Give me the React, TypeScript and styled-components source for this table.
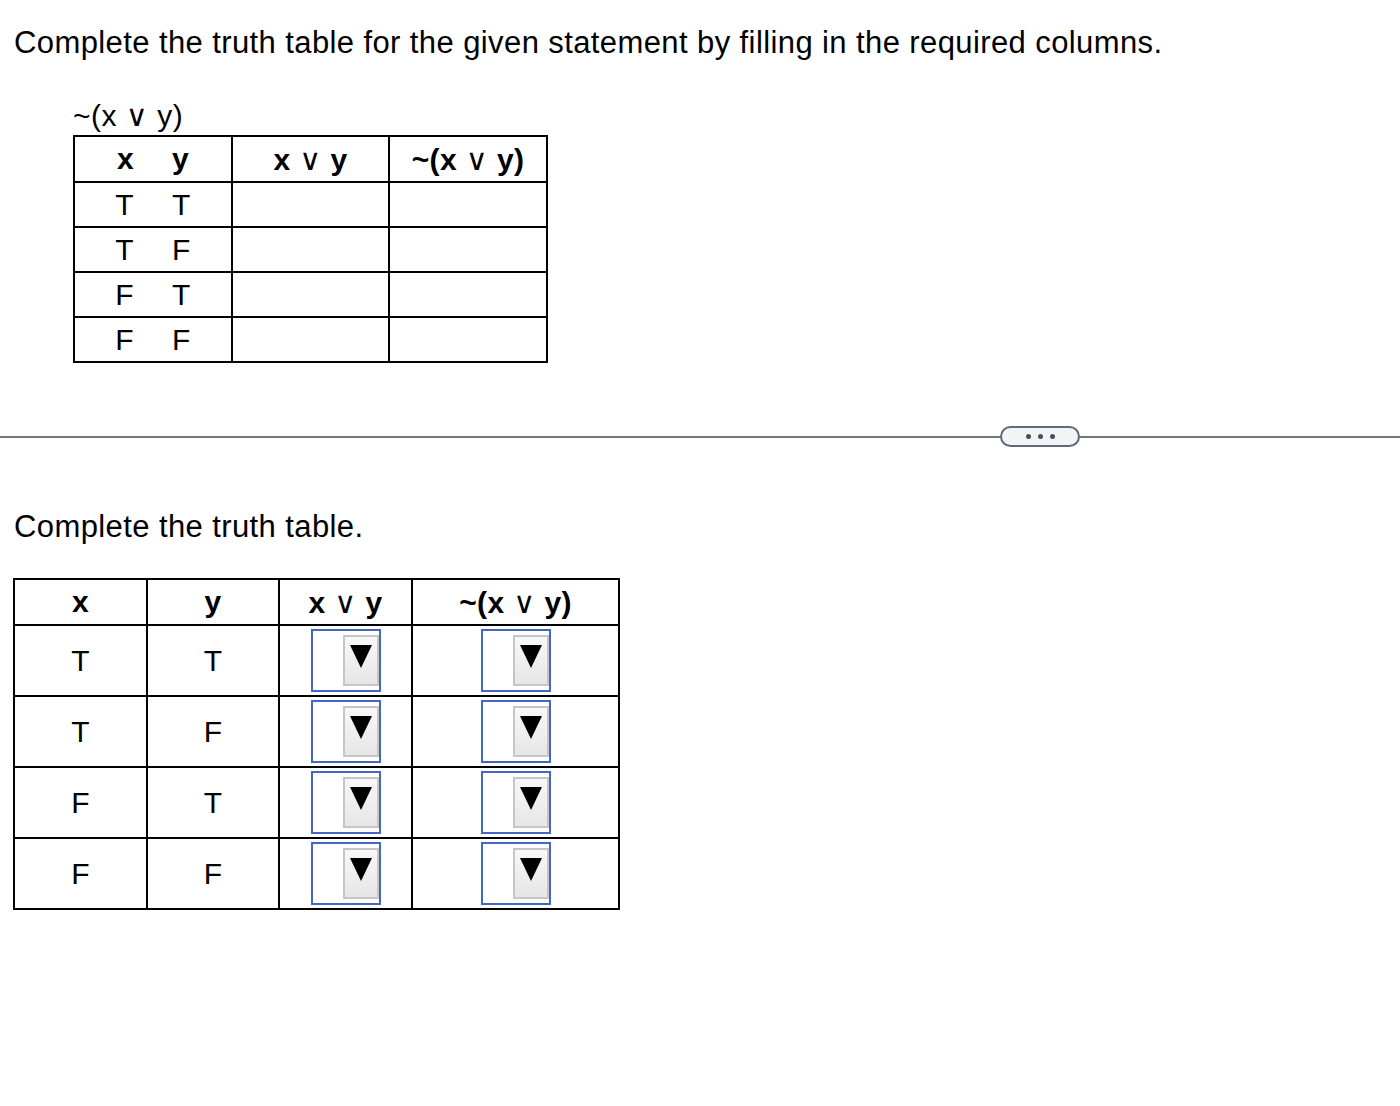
import React from 'react';
import styled, { createGlobalStyle } from 'styled-components';

const GlobalStyle = createGlobalStyle`
  html, body {
    margin: 0;
    padding: 0;
    background: #ffffff;
  }
  body {
    font-family: "Liberation Sans", Arial, "DejaVu Sans", sans-serif;
    color: #000000;
  }
`;

const rows: [string, string][] = [
  ['T', 'T'],
  ['T', 'F'],
  ['F', 'T'],
  ['F', 'F'],
];

const Or = () => <OrSign>∨</OrSign>;

const Dropdown = () => (
  <SelectBox>
    <SelectButton>
      <svg width="22" height="23" viewBox="0 0 22 23">
        <polygon points="0,0 22,0 11,23" fill="#000" />
      </svg>
    </SelectButton>
  </SelectBox>
);

export default function App() {
  return (
    <Page>
      <GlobalStyle />
      <Top>
        <Title>Complete the truth table for the given statement by filling in the required columns.</Title>
        <Statement>
          <StatementLabel>~(x <Or /> y)</StatementLabel>
          <GivenTable>
            <thead>
              <tr>
                <GivenHead $w={156}>
                  <Pair>
                    <span>x</span>
                    <span>y</span>
                  </Pair>
                </GivenHead>
                <GivenHead $w={155}>x <Or /> y</GivenHead>
                <GivenHead $w={156}>~(x <Or /> y)</GivenHead>
              </tr>
            </thead>
            <tbody>
              {rows.map(([x, y], i) => (
                <tr key={i}>
                  <GivenCell>
                    <Pair>
                      <span>{x}</span>
                      <span>{y}</span>
                    </Pair>
                  </GivenCell>
                  <GivenCell />
                  <GivenCell />
                </tr>
              ))}
            </tbody>
          </GivenTable>
        </Statement>
      </Top>

      <Divider>
        <MoreButton>
          <Dot />
          <Dot />
          <Dot />
        </MoreButton>
      </Divider>

      <Bottom>
        <Prompt>Complete the truth table.</Prompt>
        <AnswerTable>
          <thead>
            <tr>
              <AnswerHead $w={131}>x</AnswerHead>
              <AnswerHead $w={130}>y</AnswerHead>
              <AnswerHead $w={131}>x <Or /> y</AnswerHead>
              <AnswerHead $w={205}>~(x <Or /> y)</AnswerHead>
            </tr>
          </thead>
          <tbody>
            {rows.map(([x, y], i) => (
              <tr key={i}>
                <AnswerCell>{x}</AnswerCell>
                <AnswerCell>{y}</AnswerCell>
                <AnswerCell>
                  <Dropdown />
                </AnswerCell>
                <AnswerCell>
                  <Dropdown />
                </AnswerCell>
              </tr>
            ))}
          </tbody>
        </AnswerTable>
      </Bottom>
    </Page>
  );
}

const Page = styled.div`
  width: 1400px;
  min-height: 1106px;
  box-sizing: border-box;
`;

const Top = styled.section`
  padding: 24px 0 0 14px;
`;

const Title = styled.h1`
  margin: 0;
  font-size: 31px;
  font-weight: 400;
  line-height: 38px;
  letter-spacing: 0.4px;
`;

const Statement = styled.div`
  margin: 35px 0 0 59px;
`;

const StatementLabel = styled.div`
  font-size: 30px;
  line-height: 38px;
  letter-spacing: 0.5px;
`;

const OrSign = styled.span`
  font-family: "DejaVu Sans", "Liberation Sans", sans-serif;
  font-weight: 400;
  font-size: 1em;
`;

const GivenTable = styled.table`
  border-collapse: collapse;
  border: 2px solid #000;
  font-size: 30px;
  letter-spacing: 0.4px;
`;

const GivenHead = styled.th<{ $w: number }>`
  border: 2px solid #000;
  height: 44px;
  width: ${p => p.$w}px;
  padding: 0;
  font-weight: 700;
  text-align: center;
`;

const GivenCell = styled.td`
  border: 2px solid #000;
  height: 43px;
  padding: 0;
  text-align: center;
`;

const Pair = styled.div`
  display: flex;
  justify-content: center;
  gap: 38px;
`;

const Divider = styled.div`
  margin-top: 73px;
  height: 2px;
  background: #6b7785;
  position: relative;
`;

const MoreButton = styled.div`
  position: absolute;
  left: 1000px;
  top: -10px;
  width: 80px;
  height: 21px;
  box-sizing: border-box;
  border: 2px solid #5f6b78;
  border-radius: 11px;
  background: #f2f4f7;
  display: flex;
  align-items: center;
  justify-content: center;
  gap: 7px;
`;

const Dot = styled.span`
  width: 5px;
  height: 5px;
  border-radius: 50%;
  background: #4a4f55;
`;

const Bottom = styled.section`
  padding: 70px 0 0 13px;
`;

const Prompt = styled.p`
  margin: 0 0 0 1px;
  font-size: 31px;
  line-height: 38px;
  letter-spacing: 0.4px;
`;

const AnswerTable = styled.table`
  margin-top: 32px;
  border-collapse: collapse;
  border: 2px solid #000;
  font-size: 30px;
  letter-spacing: 0.4px;
`;

const AnswerHead = styled.th<{ $w: number }>`
  border: 2px solid #000;
  width: ${p => p.$w}px;
  height: 44px;
  padding: 0;
  font-weight: 700;
  text-align: center;
`;

const AnswerCell = styled.td`
  border: 2px solid #000;
  height: 69px;
  padding: 0;
  text-align: center;
  vertical-align: middle;
`;

const SelectBox = styled.div`
  display: inline-flex;
  justify-content: flex-end;
  align-items: center;
  width: 70px;
  height: 63px;
  box-sizing: border-box;
  border: 2px solid #4466c4;
  background: #fff;
  vertical-align: middle;
`;

const SelectButton = styled.div`
  width: 36px;
  height: 51px;
  box-sizing: border-box;
  border: 2px solid #c6c6c6;
  background: linear-gradient(#f8f8f8, #e6e6e6);
  display: flex;
  justify-content: center;
  padding-top: 8px;
`;
